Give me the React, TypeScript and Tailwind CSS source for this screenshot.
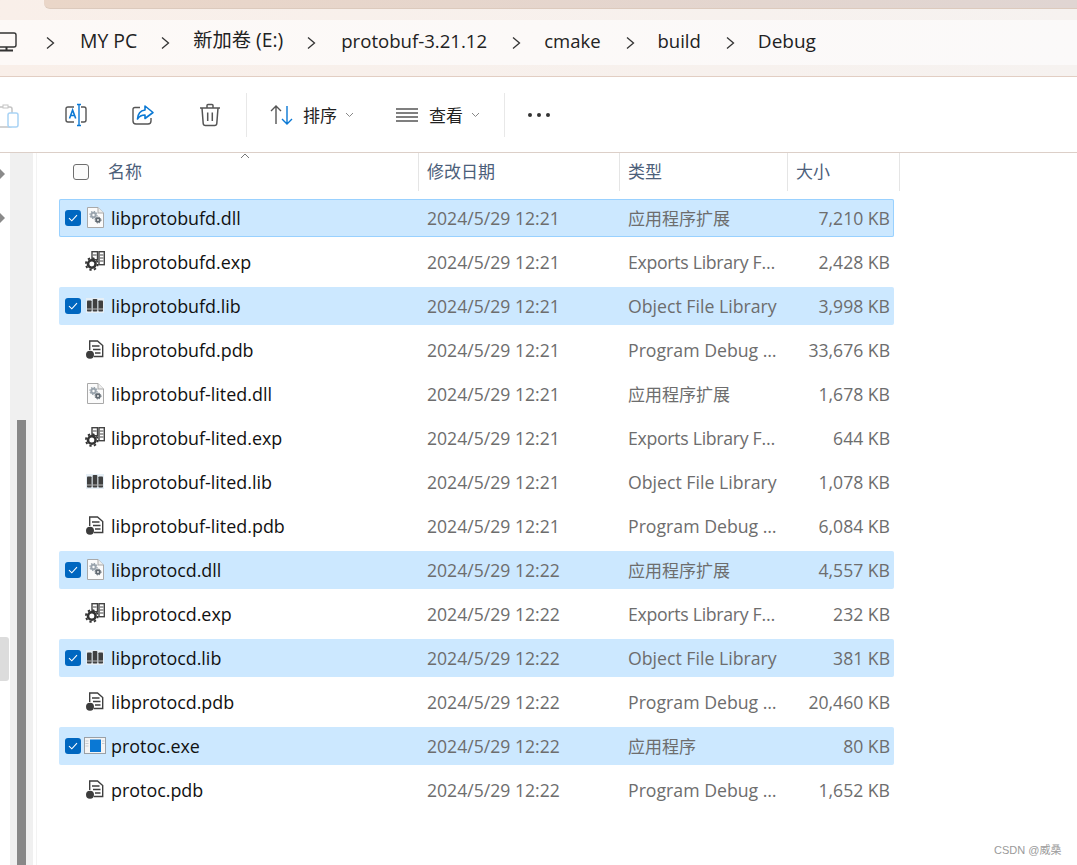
import React from "react";

function Chevron({ ml }: { ml: string }) {
  return (
    <svg width="9" height="14" viewBox="0 0 9 14" fill="none" stroke="#333" strokeWidth="1.3" className={ml + " shrink-0"}>
      <path d="M1 1.5 L7.5 7 L1 12.5" />
    </svg>
  );
}

function Check() {
  return (
    <div className="w-4 h-4 rounded-[3px] bg-[#0067c0] flex items-center justify-center shrink-0">
      <svg width="10" height="8" viewBox="0 0 10 8" fill="none" stroke="#fff" strokeWidth="1.1">
        <path d="M1 4.2 L3.8 6.8 L9 1.2" />
      </svg>
    </div>
  );
}

function DllIcon() {
  return (
    <svg width="17" height="21" viewBox="0 0 17 21">
      <path d="M0.5 0.5 H11 L16.5 6 V20.5 H0.5 Z" fill="#fbfbfb" stroke="#a9a9a9" />
      <path d="M11 0.5 V6 H16.5" fill="#eee" stroke="#a9a9a9" />
      <circle cx="6.5" cy="8" r="2.2" fill="none" stroke="#9aa4ad" strokeWidth="2" />
      <circle cx="6.5" cy="8" r="3.6" fill="none" stroke="#9aa4ad" strokeWidth="1.2" strokeDasharray="1.4 1.4" />
      <circle cx="11" cy="13" r="1.8" fill="none" stroke="#5f6870" strokeWidth="1.8" />
      <circle cx="11" cy="13" r="3" fill="none" stroke="#5f6870" strokeWidth="1" strokeDasharray="1.2 1.2" />
    </svg>
  );
}

function ExpIcon() {
  return (
    <svg width="20" height="20" viewBox="0 0 20 20">
      <rect x="7" y="0.7" width="5.5" height="8" fill="#fff" stroke="#444" strokeWidth="1.4" />
      <rect x="14" y="0.7" width="5.3" height="13" fill="#fff" stroke="#444" strokeWidth="1.4" />
      <path d="M15 4 H18.4 M15 7 H18.4 M15 10 H18.4 M8 4 H11.6" stroke="#444" />
      <circle cx="6.8" cy="13" r="3.8" fill="#fff" stroke="#333" strokeWidth="2.6" />
      <circle cx="6.8" cy="13" r="5.9" fill="none" stroke="#333" strokeWidth="1.8" strokeDasharray="2.3 2.3" />
    </svg>
  );
}

function LibIcon() {
  return (
    <svg width="18" height="15" viewBox="0 0 18 15">
      <rect x="0" y="0" width="18" height="15" fill="#e6eff6" />
      <rect x="1" y="2.5" width="4.6" height="11" rx="0.8" fill="#404040" />
      <rect x="6.7" y="1" width="4.6" height="12.5" rx="0.8" fill="#404040" />
      <rect x="12.4" y="2.5" width="4.6" height="11" rx="0.8" fill="#404040" />
      <path d="M1 11 H5.6 M6.7 11 H11.3 M12.4 11 H17" stroke="#b8b8b8" />
    </svg>
  );
}

function PdbIcon() {
  return (
    <svg width="18" height="19" viewBox="0 0 18 19">
      <path d="M3.7 10 V1 H11.5 L16.7 5.5 V16.5 H8" fill="#fff" stroke="#3f3f3f" strokeWidth="1.4" />
      <path d="M6 6 H13.5 M7 9.5 H14.5 M9 13 H14.5" stroke="#3f3f3f" strokeWidth="1.3" />
      <circle cx="4" cy="14.8" r="4" fill="#3c3c3c" />
    </svg>
  );
}

function ExeIcon() {
  return (
    <svg width="22" height="17" viewBox="0 0 22 17">
      <rect x="0.5" y="0.5" width="21" height="16" fill="#f4f4f4" stroke="#9aa0a6" />
      <rect x="6" y="2.5" width="11" height="12.5" fill="#0a78d4" />
      <path d="M1.5 4 H4.5 M1.5 6.5 H4.5 M1.5 9 H4.5 M18 4 H20.5 M18 6.5 H20.5" stroke="#c6ccd2" />
    </svg>
  );
}

type Kind = "dll" | "exp" | "lib" | "pdb" | "exe";
const dll = "应用程序扩展";
const exp = "Exports Library F…";
const lib = "Object File Library";
const pdb = "Program Debug …";

const rows: { n: string; d: string; t: string; s: string; k: Kind; sel?: boolean; focus?: boolean }[] = [
  { n: "libprotobufd.dll", d: "2024/5/29 12:21", t: dll, s: "7,210 KB", k: "dll", sel: true, focus: true },
  { n: "libprotobufd.exp", d: "2024/5/29 12:21", t: exp, s: "2,428 KB", k: "exp" },
  { n: "libprotobufd.lib", d: "2024/5/29 12:21", t: lib, s: "3,998 KB", k: "lib", sel: true },
  { n: "libprotobufd.pdb", d: "2024/5/29 12:21", t: pdb, s: "33,676 KB", k: "pdb" },
  { n: "libprotobuf-lited.dll", d: "2024/5/29 12:21", t: dll, s: "1,678 KB", k: "dll" },
  { n: "libprotobuf-lited.exp", d: "2024/5/29 12:21", t: exp, s: "644 KB", k: "exp" },
  { n: "libprotobuf-lited.lib", d: "2024/5/29 12:21", t: lib, s: "1,078 KB", k: "lib" },
  { n: "libprotobuf-lited.pdb", d: "2024/5/29 12:21", t: pdb, s: "6,084 KB", k: "pdb" },
  { n: "libprotocd.dll", d: "2024/5/29 12:22", t: dll, s: "4,557 KB", k: "dll", sel: true },
  { n: "libprotocd.exp", d: "2024/5/29 12:22", t: exp, s: "232 KB", k: "exp" },
  { n: "libprotocd.lib", d: "2024/5/29 12:22", t: lib, s: "381 KB", k: "lib", sel: true },
  { n: "libprotocd.pdb", d: "2024/5/29 12:22", t: pdb, s: "20,460 KB", k: "pdb" },
  { n: "protoc.exe", d: "2024/5/29 12:22", t: "应用程序", s: "80 KB", k: "exe", sel: true },
  { n: "protoc.pdb", d: "2024/5/29 12:22", t: pdb, s: "1,652 KB", k: "pdb" },
];

function FileIcon({ k }: { k: Kind }) {
  if (k === "dll") return <DllIcon />;
  if (k === "exp") return <ExpIcon />;
  if (k === "lib") return <LibIcon />;
  if (k === "pdb") return <PdbIcon />;
  return <ExeIcon />;
}

function Row({ r }: { r: (typeof rows)[number] }) {
  const cjk = r.t === dll || r.t === "应用程序";
  return (
    <div
      className={
        "h-[38px] mb-1.5 flex items-center rounded-[2px] " +
        (r.sel ? "bg-[#cce8ff] " : "") +
        (r.focus ? "shadow-[inset_0_0_0_1px_#99d1ff] " : "")
      }
    >
      <div className="w-[52px] shrink-0 flex items-center pl-[6px] relative h-full">
        {r.sel && <Check />}
        <div className="absolute left-[25px] top-0 h-[36px] w-[22px] flex items-center justify-center">
          <FileIcon k={r.k} />
        </div>
      </div>
      <div className="w-[316px] shrink-0 text-[17.9px] text-[#111] whitespace-nowrap">{r.n}</div>
      <div className="w-[201px] shrink-0 text-[17.6px] text-[#6d6d6d] whitespace-nowrap">{r.d}</div>
      <div
        className={
          "w-[170px] shrink-0 text-[#6d6d6d] whitespace-nowrap " +
          (cjk ? "text-[17px] mt-[2px] " : "text-[17.7px] ") +
          (r.t === exp ? "tracking-[-0.3px]" : "")
        }
      >
        {r.t}
      </div>
      <div className="w-[92px] shrink-0 text-[17.6px] text-[#6d6d6d] text-right whitespace-nowrap">{r.s}</div>
    </div>
  );
}

function HeaderCell({ label, w }: { label: string; w: string }) {
  return (
    <div className={w + " shrink-0 h-full border-r border-[#e5e5e5] pl-[8px] flex items-center text-[17px] text-[#4c607a]"}>
      {label}
    </div>
  );
}

export default function App() {
  return (
    <div className="w-[1077px] h-[865px] overflow-hidden bg-white flex flex-col text-[#111]">
      <div className="font-['Open_Sans','Noto_Sans_CJK_SC',sans-serif] flex flex-col h-full">
        {/* title strip + address */}
        <div className="h-[77px] shrink-0 bg-gradient-to-r from-[#f9efe9] to-[#f6f2f0] border-b border-[#e2cec3] flex flex-col">
          <div className="h-[9px] shrink-0 ml-[44px] bg-gradient-to-r from-[#ead6c8] to-[#e0d5d2] border-b border-[#dccabd] rounded-bl-[6px]" />
          <div className="mt-[11px] h-[45px] bg-gradient-to-r from-[#fdf9f7] to-[#fbf9f9] flex items-center text-[18.5px] text-[#222] whitespace-nowrap">
            <svg width="18" height="21" viewBox="0 0 18 21" fill="none" stroke="#333" strokeWidth="1.4" className="shrink-0">
              <rect x="-4" y="1" width="20" height="14" rx="2" />
              <path d="M0 18.5 H13 M6.5 15 V18.5" strokeWidth="2" />
            </svg>
            <Chevron ml="ml-[28px]" />
            <span className="ml-[25px] mb-[4px] text-[19.4px]">MY PC</span>
            <Chevron ml="ml-[24px]" />
            <span className="ml-[23px] mb-[4px] text-[19.3px]">新加卷 (E:)</span>
            <Chevron ml="ml-[24px]" />
            <span className="ml-[25px] mb-[4px] text-[18.6px]">protobuf-3.21.12</span>
            <Chevron ml="ml-[25px]" />
            <span className="ml-[23px] mb-[4px] text-[18.5px]">cmake</span>
            <Chevron ml="ml-[25px]" />
            <span className="ml-[23px] mb-[4px] text-[18.5px]">build</span>
            <Chevron ml="ml-[25px]" />
            <span className="ml-[23px] mb-[2px] text-[19px]">Debug</span>
          </div>
        </div>

        {/* toolbar */}
        <div className="h-[76px] shrink-0 border-b border-[#dccfc8] flex items-center text-[18px] text-[#222]">
          <svg width="20" height="24" viewBox="0 0 20 24" fill="none" className="shrink-0 mt-[2px]">
            <rect x="-6" y="3" width="18" height="20" rx="2" stroke="#c4c4c4" strokeWidth="1.5" />
            <rect x="3" y="1" width="5" height="3" fill="#fff" stroke="#c4c4c4" />
            <rect x="8" y="9" width="10" height="14" rx="2" fill="#fff" stroke="#a9d3f5" strokeWidth="1.5" />
          </svg>
          <svg width="24" height="24" viewBox="0 0 24 24" fill="none" className="shrink-0 ml-[44px]">
            <path d="M10 4 H4 Q2 4 2 6 V17 Q2 19 4 19 H10" stroke="#555" strokeWidth="1.4" />
            <path d="M17 4 H20 Q22 4 22 6 V17 Q22 19 20 19 H17" stroke="#555" strokeWidth="1.4" />
            <path d="M13 1.5 H17 M15 1.5 V22.5 M13 22.5 H17" stroke="#0a78d4" strokeWidth="1.4" />
            <path d="M5.5 15.5 L8.6 7 L11.7 15.5 M6.7 12.5 H10.5" stroke="#0a78d4" strokeWidth="1.6" />
          </svg>
          <svg width="24" height="24" viewBox="0 0 24 24" fill="none" className="shrink-0 ml-[43px]">
            <path d="M9 4.5 H4 Q2 4.5 2 6.5 V18 Q2 21 5 21 H17 Q20 21 20 18 V15" stroke="#555" strokeWidth="1.4" />
            <path d="M14 3 L22 9.5 L14 15.5 V12 Q9 12 6.5 16 Q7 8 14 7 Z" stroke="#0a78d4" strokeWidth="1.6" strokeLinejoin="round" />
          </svg>
          <svg width="22" height="24" viewBox="0 0 22 24" fill="none" stroke="#555" strokeWidth="1.5" className="shrink-0 ml-[44px]">
            <path d="M1 5 H21 M8 5 V2.5 Q8 1.5 9 1.5 H13 Q14 1.5 14 2.5 V5" />
            <path d="M3 5 L4.2 20.5 Q4.4 22.5 6.4 22.5 H15.6 Q17.6 22.5 17.8 20.5 L19 5" />
            <path d="M8.7 9.5 V18 M13.3 9.5 V18" />
          </svg>
          <div className="w-px h-[44px] bg-[#e8e8e8] ml-[25px] shrink-0" />
          <svg width="24" height="22" viewBox="0 0 24 22" fill="none" className="shrink-0 ml-[23px]" strokeWidth="1.4">
            <path d="M6 20 V2 M1 7 L6 2 L11 7" stroke="#555" />
            <path d="M17 2 V20 M12 15 L17 20 L22 15" stroke="#0a78d4" />
          </svg>
          <span className="ml-[9px] mt-[2px] text-[17px]">排序</span>
          <svg width="9" height="6" viewBox="0 0 9 6" fill="none" stroke="#888" className="ml-[8px] shrink-0 mt-[1px]"><path d="M1 1 L4.5 4.5 L8 1" /></svg>
          <svg width="22" height="16" viewBox="0 0 22 16" fill="none" stroke="#555" strokeWidth="1.3" className="ml-[42px] shrink-0">
            <path d="M0 2 H22 M0 6 H22 M0 10 H22 M0 14 H22" />
          </svg>
          <span className="ml-[11px] mt-[2px] text-[17px]">查看</span>
          <svg width="9" height="6" viewBox="0 0 9 6" fill="none" stroke="#888" className="ml-[8px] shrink-0 mt-[1px]"><path d="M1 1 L4.5 4.5 L8 1" /></svg>
          <div className="w-px h-[44px] bg-[#e8e8e8] ml-[24px] shrink-0" />
          <svg width="24" height="6" viewBox="0 0 24 6" fill="#333" className="ml-[22px] shrink-0">
            <circle cx="3" cy="3" r="2" /><circle cx="12" cy="3" r="2" /><circle cx="21" cy="3" r="2" />
          </svg>
        </div>

        {/* body */}
        <div className="flex-1 flex min-h-0">
          {/* nav pane edge */}
          <div className="w-[10px] shrink-0 relative">
            <div className="absolute left-0 top-[16px] w-0 h-0 border-y-[5px] border-y-transparent border-l-[5px] border-l-[#8a8a8a]" />
            <div className="absolute left-0 top-[60px] w-0 h-0 border-y-[5px] border-y-transparent border-l-[5px] border-l-[#8a8a8a]" />
            <div className="absolute left-0 top-[484px] w-[9px] h-[44px] bg-[#dcdcdc] rounded-r-[3px]" />
          </div>
          <div className="w-[23px] shrink-0 bg-[#f0f0f0] relative">
            <div className="absolute left-[7px] top-[267px] bottom-0 w-[9px] bg-[#888888]" />
          </div>
          <div className="w-[3px] shrink-0" />
          <div className="w-px shrink-0 bg-[#f3f3f3]" />
          <div className="w-[22px] shrink-0" />

          {/* list */}
          <div className="flex-1 min-w-0">
            <div className="w-[841px] h-[38px] flex items-center relative">
              <svg width="10" height="6" viewBox="0 0 10 6" fill="none" stroke="#777" className="absolute left-[181px] top-0"><path d="M1 5 L5 1 L9 5" /></svg>
              <div className="w-[360px] shrink-0 h-full border-r border-[#e5e5e5] flex items-center pl-[14px] text-[17px] text-[#4c607a]">
                <div className="w-4 h-4 rounded-[3px] border border-[#6e6e6e] bg-[#fbfbfb] shrink-0" />
                <span className="ml-[19px]">名称</span>
              </div>
              <HeaderCell label="修改日期" w="w-[201px]" />
              <HeaderCell label="类型" w="w-[168px]" />
              <HeaderCell label="大小" w="w-[112px]" />
            </div>
            <div className="w-[835px] mt-[8px]">
              {rows.map((r) => (
                <Row key={r.n} r={r} />
              ))}
            </div>
          </div>
        </div>
      </div>
      <div className="absolute left-[994px] top-[842px] text-[11px] text-[#9a9a9a] font-['Liberation_Sans','Noto_Sans_CJK_SC',sans-serif]">CSDN @威桑</div>
    </div>
  );
}
